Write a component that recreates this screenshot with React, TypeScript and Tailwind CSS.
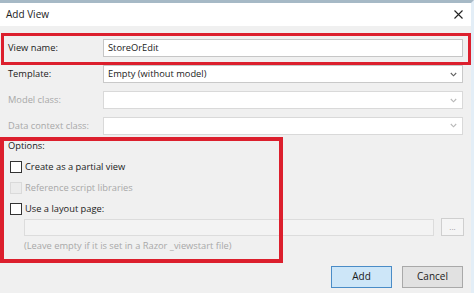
import React from "react";

const Chevron = ({ color = "#606060" }: { color?: string }) => (
  <svg width="7" height="5" viewBox="0 0 7 5" className="shrink-0">
    <path d="M0.8 1 L3.5 3.8 L6.2 1" fill="none" stroke={color} strokeWidth="1.1" />
  </svg>
);

const Select = ({ value, disabled }: { value?: string; disabled?: boolean }) => (
  <div
    className={`flex h-[18px] w-[360px] items-center justify-between border bg-white pl-[4px] pr-[5px] ${
      disabled ? "border-[#d9d9d9]" : "border-[#c9c9c9]"
    }`}
  >
    <span className="text-[#1a1a1a]">{value}</span>
    <Chevron color={disabled ? "#b8b8b8" : "#606060"} />
  </div>
);

const Checkbox = ({ disabled }: { disabled?: boolean }) => (
  <div
    className={`h-[12px] w-[12px] shrink-0 border ${
      disabled ? "border-[#dadada] bg-[#ececec]" : "border-[#333333] bg-white"
    }`}
  />
);

export default function App() {
  return (
    <div
      className="relative h-[293px] w-[474px] overflow-hidden border-t-[3px] border-r-[3px] border-[#a6b9c6] border-r-[#e3eef7] bg-[#f0f0f0] text-[9.3px] text-[#1a1a1a]"
      style={{ fontFamily: '"Open Sans", "Noto Sans", sans-serif' }}
    >
      {/* title bar */}
      <div className="flex h-[23px] items-center justify-between bg-white pl-[6px] pr-[8px]">
        <span className="text-[10px] text-[#222]">Add View</span>
        <svg width="9" height="9" viewBox="0 0 9 9">
          <path d="M0.5 0.5 L8.5 8.5 M8.5 0.5 L0.5 8.5" stroke="#222" strokeWidth="1.1" />
        </svg>
      </div>

      {/* form */}
      <div className="flex flex-col gap-[8px] pl-[8px] pt-[13px]">
        <div className="flex h-[18px] items-center">
          <span className="w-[95px]">View name:</span>
          <div className="flex h-[18px] w-[360px] items-center border border-[#c6c6c6] bg-white pl-[4px]">
            StoreOrEdit
          </div>
        </div>
        <div className="flex h-[18px] items-center">
          <span className="w-[95px]">Template:</span>
          <Select value="Empty (without model)" />
        </div>
        <div className="flex h-[18px] items-center">
          <span className="w-[95px] text-[#a8a8a8]">Model class:</span>
          <Select disabled />
        </div>
        <div className="flex h-[17px] items-center">
          <span className="w-[95px] text-[#a8a8a8]">Data context class:</span>
          <Select disabled />
        </div>
      </div>

      {/* options */}
      <div className="flex flex-col pl-[8px] pt-[5px]">
        <div className="flex h-[14px] items-center">Options:</div>
        <div className="flex flex-col gap-[9px] pl-[2px] pt-[8px]">
          <div className="flex h-[12px] items-center gap-[3px]">
            <Checkbox />
            <span>Create as a partial view</span>
          </div>
          <div className="flex h-[12px] items-center gap-[3px]">
            <Checkbox disabled />
            <span className="text-[#a8a8a8]">Reference script libraries</span>
          </div>
          <div className="flex h-[12px] items-center gap-[3px]">
            <Checkbox />
            <span>Use a layout page:</span>
          </div>
        </div>
        <div className="flex items-center gap-[7px] pl-[16px] pt-[3px]">
          <div className="h-[17px] w-[410px] border border-[#dcdcdc] bg-[#f3f3f3]" />
          <div className="flex h-[18px] w-[23px] items-center justify-center border border-[#cfcfcf] bg-[#f5f5f5] text-[8px] leading-none text-[#9a9a9a]">
            ...
          </div>
        </div>
        <div className="pl-[16px] pt-[3px] text-[#a8a8a8]">
          (Leave empty if it is set in a Razor _viewstart file)
        </div>
      </div>

      {/* buttons */}
      <div className="flex justify-end gap-[10px] pr-[8px] pt-[13px]">
        <div className="flex h-[22px] w-[61px] items-center justify-center border border-[#4a8cc7] bg-[#cde6f8] text-[10px]">
          Add
        </div>
        <div className="flex h-[22px] w-[61px] items-center justify-center border border-[#a9a9a9] bg-[#e1e1e1] text-[10px]">
          Cancel
        </div>
      </div>

      {/* annotation boxes */}
      <div className="absolute left-[1px] top-[30px] h-[32px] w-[470px] border-[3px] border-[#dc1f2d]" />
      <div className="absolute left-0 top-[134px] h-[126px] w-[283px] border-[4px] border-[#dc1f2d]" />
    </div>
  );
}
